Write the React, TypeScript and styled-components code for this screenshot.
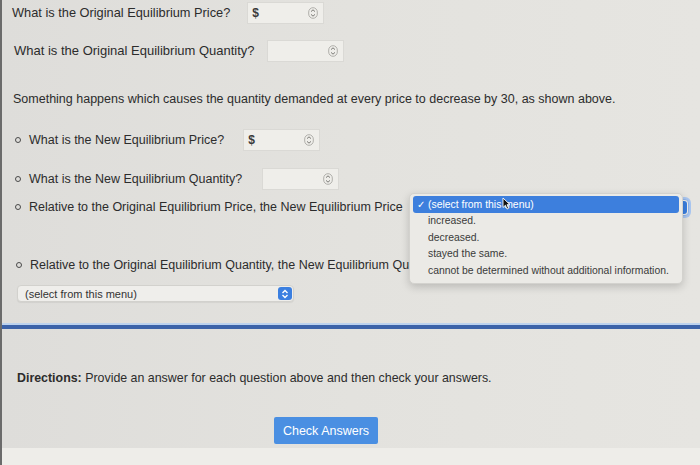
import React from "react";
import styled, { createGlobalStyle } from "styled-components";

const Global = createGlobalStyle`
  html, body { margin: 0; padding: 0; }
  body {
    background: #e2e1dd;
    font-family: "Liberation Sans", Arial, Helvetica, sans-serif;
    color: #2c2c2c;
  }
`;

const Page = styled.div`
  width: 700px;
  height: 465px;
  box-sizing: border-box;
  border-left: 2px solid #6b6b6b;
  background: linear-gradient(90deg, #dedddA 0%, #e3e2de 50%, #e6e5e1 100%);
  display: flex;
  flex-direction: column;
  overflow: hidden;
  position: relative;
`;

const Content = styled.div`
  display: flex;
  flex-direction: column;
  padding-left: 9px;
`;

const Row = styled.div<{ $mt: number; $h?: number; $indent?: number }>`
  display: flex;
  align-items: center;
  margin-top: ${(p) => p.$mt}px;
  height: ${(p) => p.$h ?? 16}px;
  padding-left: ${(p) => p.$indent ?? 0}px;
  position: relative;
  white-space: nowrap;
`;

const Label = styled.span<{ $size?: number }>`
  font-size: ${(p) => p.$size ?? 12.5}px;
  line-height: 16px;
  color: #2c2c2c;
`;

const Bullet = styled.span`
  display: inline-block;
  width: 4px;
  height: 4px;
  border: 1px solid #4a4a4a;
  border-radius: 50%;
  margin-left: 1px;
  margin-right: 8px;
  flex: none;
`;

const NumBox = styled.div<{ $gap: number }>`
  margin-left: ${(p) => p.$gap}px;
  width: 77px;
  height: 22px;
  box-sizing: border-box;
  background: #efeeea;
  border: 1px solid #dad9d5;
  display: flex;
  align-items: center;
  justify-content: space-between;
  padding: 0 5px 0 4px;
  font-size: 12px;
  font-weight: bold;
  color: #3a3a3a;
`;

const Spin = () => (
  <svg width="10" height="12" viewBox="0 0 10 12">
    <rect x="0.7" y="0.7" width="8.6" height="10.6" rx="4.3" fill="none" stroke="#a9a8a4" strokeWidth="0.9" />
    <path d="M3 4.6 L5 2.8 L7 4.6" fill="none" stroke="#7a7975" strokeWidth="1" />
    <path d="M3 7.4 L5 9.2 L7 7.4" fill="none" stroke="#7a7975" strokeWidth="1" />
  </svg>
);

const Para = styled.p`
  margin: 29px 0 0 2px;
  font-size: 12.5px;
  line-height: 16px;
  height: 16px;
  white-space: nowrap;
`;

const SelectBox = styled.div<{ $w: number; $focus?: boolean; $ml?: number }>`
  width: ${(p) => p.$w}px;
  height: 17px;
  margin-left: ${(p) => p.$ml ?? 0}px;
  box-sizing: border-box;
  background: #efeeeb;
  border: 1px solid ${(p) => (p.$focus ? "#8fb3ea" : "#d2d1cd")};
  border-radius: 4px;
  box-shadow: ${(p) =>
    p.$focus ? "0 0 0 2px #a9c6f0" : "0 1px 1px rgba(0,0,0,0.06)"};
  display: flex;
  align-items: center;
  justify-content: space-between;
  padding: 0 1px 0 7px;
  font-size: 11px;
  color: #333;
  flex: none;
`;

const BlueKnob = styled.span`
  width: 14px;
  height: 13px;
  border-radius: 3px;
  background: #3b7fe0;
  display: flex;
  align-items: center;
  justify-content: center;
`;

const Menu = styled.div`
  position: absolute;
  left: 398px;
  top: -5px;
  width: 274px;
  height: 91px;
  box-sizing: border-box;
  background: #ebeae6;
  border: 1px solid #d3d2ce;
  border-radius: 5px;
  box-shadow: 0 3px 8px rgba(0, 0, 0, 0.18);
  padding: 2px 3px;
  display: flex;
  flex-direction: column;
  z-index: 5;
`;

const Item = styled.div<{ $sel?: boolean }>`
  height: 16.5px;
  display: flex;
  align-items: center;
  padding-left: ${(p) => (p.$sel ? 4 : 15)}px;
  border-radius: 3px;
  background: ${(p) => (p.$sel ? "#3d7fdd" : "transparent")};
  color: ${(p) => (p.$sel ? "#ffffff" : "#3a3a3a")};
  font-size: 10.4px;
  white-space: nowrap;
`;

const Check = styled.span`
  width: 11px;
  font-size: 10px;
`;

const Cursor = styled.svg`
  position: absolute;
  left: 92px;
  top: 3px;
`;

const Rule = styled.div`
  margin-top: 21px;
  height: 2px;
  background: #bcd2ee;
  border-bottom: 4px solid #3c63a9;
  margin-left: -2px;
`;

const Directions = styled.p`
  margin: 41px 0 0 15px;
  font-size: 12.4px;
  line-height: 16px;
  height: 16px;
  white-space: nowrap;
  b { font-weight: bold; }
`;

const ButtonRow = styled.div`
  display: flex;
  margin-top: 31px;
  padding-left: 272px;
`;

const CheckButton = styled.button`
  width: 104px;
  height: 27px;
  border: none;
  border-radius: 2px;
  background: #4a8fe2;
  color: #fff;
  font-family: "Liberation Sans", Arial, sans-serif;
  font-size: 12.5px;
  padding: 0;
  cursor: pointer;
`;

const Footer = styled.div`
  flex: 1;
  margin-top: 4px;
  background: #eeede9;
`;

const KnobIcon = () => (
  <svg width="8" height="10" viewBox="0 0 8 10">
    <path d="M1.5 4 L4 1.5 L6.5 4" fill="none" stroke="#fff" strokeWidth="1.4" />
    <path d="M1.5 6 L4 8.5 L6.5 6" fill="none" stroke="#fff" strokeWidth="1.4" />
  </svg>
);

export default function App() {
  return (
    <>
      <Global />
      <Page>
        <Content>
          <Row $mt={2} $h={22} $indent={1}>
            <Label $size={12.8}>What is the Original Equilibrium Price?</Label>
            <NumBox $gap={17}>
              <span>$</span>
              <Spin />
            </NumBox>
          </Row>
          <Row $mt={16} $h={22} $indent={3}>
            <Label $size={13}>What is the Original Equilibrium Quantity?</Label>
            <NumBox $gap={12}>
              <span />
              <Spin />
            </NumBox>
          </Row>
          <Para>
            Something happens which causes the quantity demanded at every price to decrease by 30, as shown above.
          </Para>
          <Row $mt={21} $h={23} $indent={3}>
            <Bullet />
            <Label>What is the New Equilibrium Price?</Label>
            <NumBox $gap={19}>
              <span>$</span>
              <Spin />
            </NumBox>
          </Row>
          <Row $mt={16} $h={23} $indent={3}>
            <Bullet />
            <Label>What is the New Equilibrium Quantity?</Label>
            <NumBox $gap={20}>
              <span />
              <Spin />
            </NumBox>
          </Row>
          <Row $mt={8} $h={18} $indent={3}>
            <Bullet />
            <Label>Relative to the Original Equilibrium Price, the New Equilibrium Price</Label>
            <SelectBox $w={276} $focus $ml={10}>
              <span>(select from this menu)</span>
              <BlueKnob>
                <KnobIcon />
              </BlueKnob>
            </SelectBox>
            <Menu>
              <Item $sel>
                <Check>✓</Check>(select from this menu)
              </Item>
              <Item>increased.</Item>
              <Item>decreased.</Item>
              <Item>stayed the same.</Item>
              <Item>cannot be determined without additional information.</Item>
              <Cursor width="9" height="13" viewBox="0 0 9 13">
                <path d="M1 1 L1 10.5 L3.4 8.3 L5 12 L6.6 11.3 L5 7.7 L8 7.7 Z" fill="#111" stroke="#fff" strokeWidth="0.9" />
              </Cursor>
            </Menu>
          </Row>
          <Row $mt={41} $h={16} $indent={4}>
            <Bullet />
            <Label>Relative to the Original Equilibrium Quantity, the New Equilibrium Quantity</Label>
          </Row>
          <Row $mt={12} $h={17} $indent={6}>
            <SelectBox $w={277}>
              <span>(select from this menu)</span>
              <BlueKnob>
                <KnobIcon />
              </BlueKnob>
            </SelectBox>
          </Row>
        </Content>
        <Rule />
        <Directions>
          <b>Directions:</b> Provide an answer for each question above and then check your answers.
        </Directions>
        <ButtonRow>
          <CheckButton>Check Answers</CheckButton>
        </ButtonRow>
        <Footer />
      </Page>
    </>
  );
}
